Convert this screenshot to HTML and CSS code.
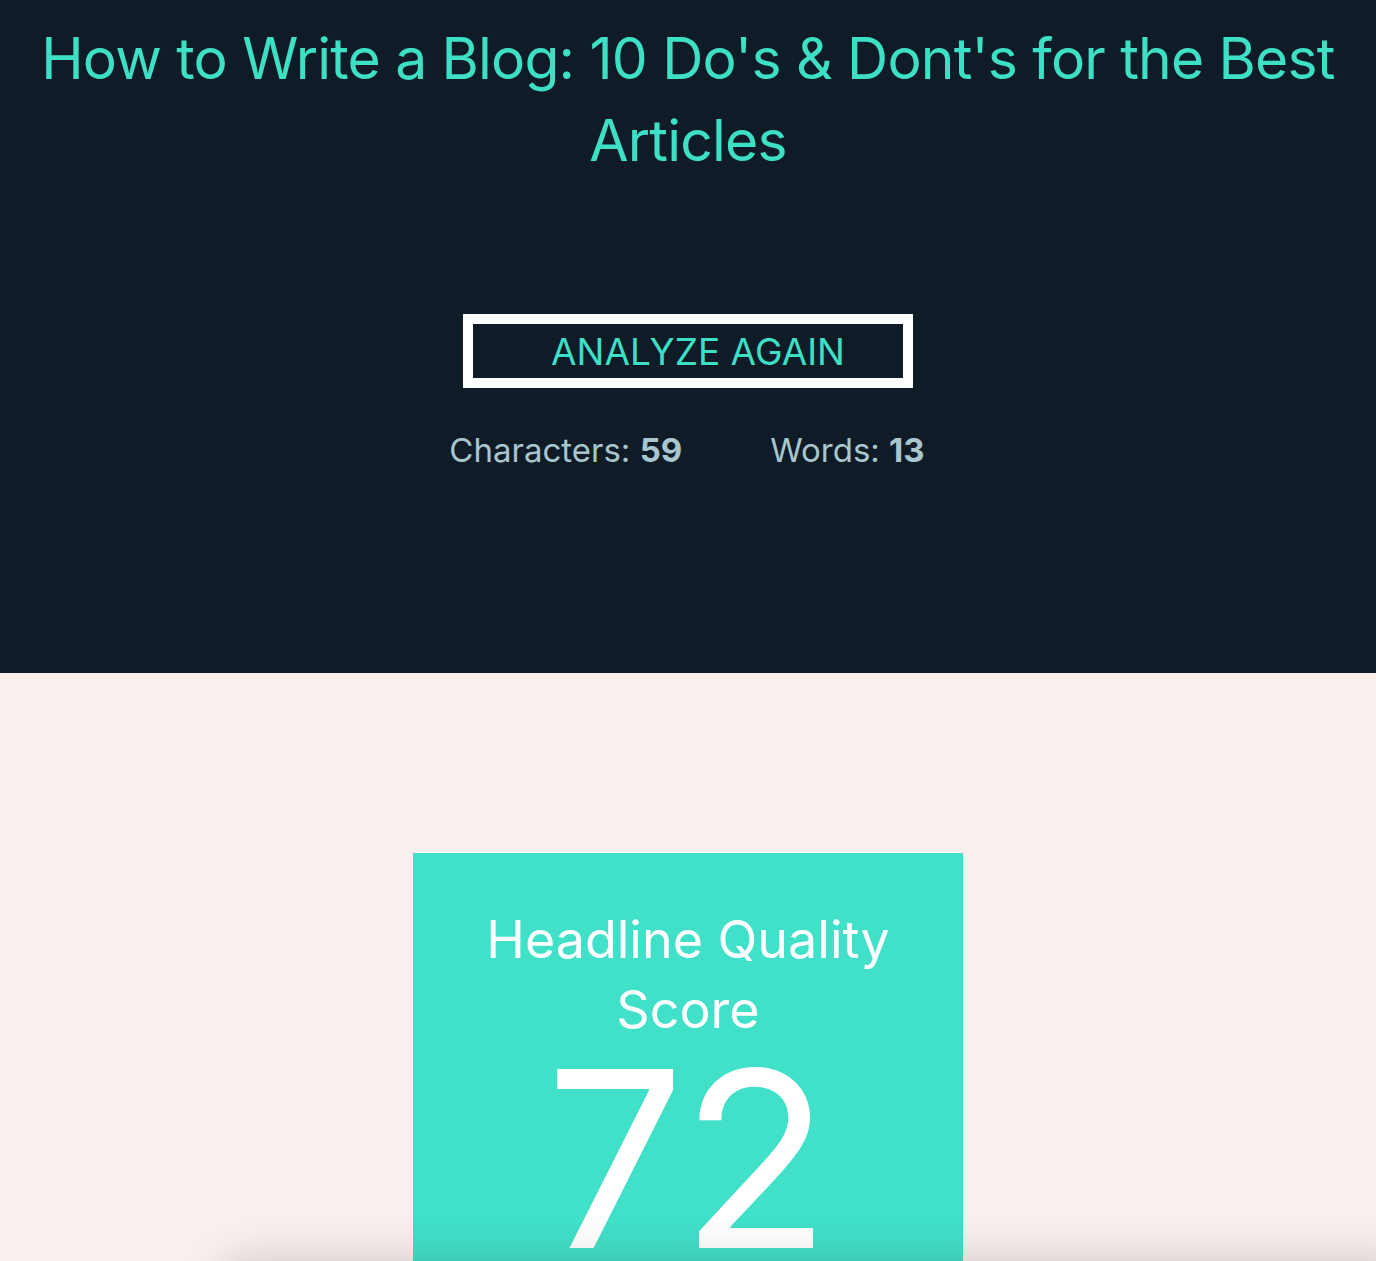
FILE: index.html
```html
<!DOCTYPE html>
<html lang="en">
  <head>
    <meta charset="UTF-8" />
    <meta name="viewport" content="width=device-width, initial-scale=1.0" />
    <title>Headline Analyzer</title>
    <link rel="stylesheet" href="styles.css">
  </head>
  <body>
    <section class="hero">
      <h1 class="headline">How to Write a Blog: 10 Do's &amp; Dont's for the Best Articles</h1>

      <button class="analyze-button">ANALYZE AGAIN</button>

      <div class="counts">
        <p>Characters: <strong>59</strong></p>
        <p>Words: <strong>13</strong></p>
      </div>
    </section>

    <section class="results">
      <div class="score-card">
        <h2>Headline Quality Score</h2>
        <div class="score">72</div>
      </div>
    </section>

    <div class="bottom-bar"></div>
  </body>
</html>
```

FILE: styles.css
```css
body {
  margin: 0;
  font-family: "Inter", sans-serif;
  background-color: #f9f0ee;
  overflow: hidden;
}

.hero {
  background-color: #0f1c28;
  height: 673px;
  display: flex;
  flex-direction: column;
  align-items: center;
  padding: 18px 20px 0;
  box-sizing: border-box;
}

.headline {
  margin: 0;
  font-size: 57px;
  font-weight: 400;
  line-height: 82px;
  letter-spacing: -0.8px;
  color: #3ddfc5;
  text-align: center;
}

.analyze-button {
  margin-top: 132px;
  width: 450px;
  height: 74px;
  background-color: transparent;
  border: 10px solid #ffffff;
  color: #3ddfc5;
  font-family: inherit;
  font-size: 37px;
  font-weight: 400;
  padding: 0 0 0 20px;
  cursor: pointer;
}

.counts {
  display: flex;
  gap: 88px;
  margin-top: 42px;
  margin-left: -2px;
}

.counts p {
  margin: 0;
  font-size: 33px;
  color: #a9c5cd;
}

.counts strong {
  font-weight: 700;
}

.results {
  display: flex;
  justify-content: center;
  padding-top: 180px;
}

.score-card {
  width: 550px;
  height: 560px;
  background-color: #40e0c9;
  color: #ffffff;
  text-align: center;
  padding-top: 52px;
  box-sizing: border-box;
}

.score-card h2 {
  margin: 0 auto;
  width: 420px;
  font-size: 52px;
  font-weight: 400;
  line-height: 70px;
}

.score {
  font-size: 246px;
  font-weight: 400;
  line-height: 1;
  letter-spacing: -4px;
  margin-top: -9px;
  margin-right: 4px;
}

/* sticky footer bar sitting just below the fold */
.bottom-bar {
  position: fixed;
  left: 220px;
  right: -40px;
  bottom: -60px;
  height: 60px;
  border-radius: 30px;
  background-color: #f9f0ee;
  box-shadow: 0 0 44px rgba(60, 40, 30, 0.22);
}
```
